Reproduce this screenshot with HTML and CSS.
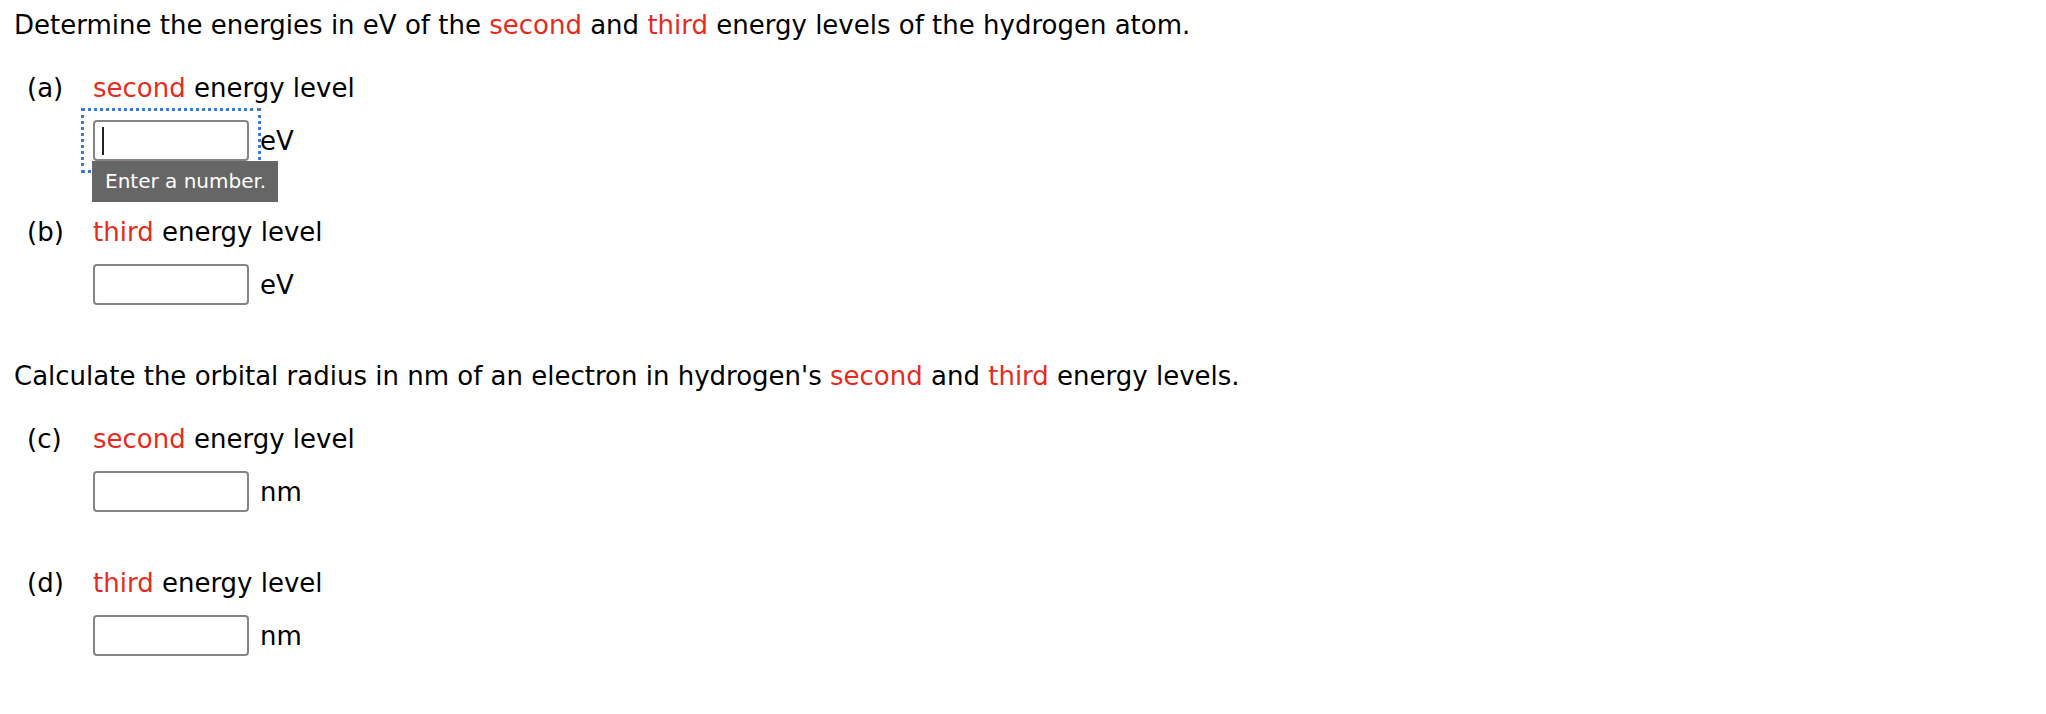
FILE: index.html
```html
<!DOCTYPE html>
<html lang="en">
<head>
    <meta charset="UTF-8">
    <meta name="viewport" content="width=device-width, initial-scale=1.0">
    <title>Hydrogen Energy Levels</title>
    <link rel="stylesheet" href="styles.css">
</head>
<body>
    <div class="question">
        <p class="prompt">Determine the energies in eV of the <span class="red">second</span> and <span class="red">third</span> energy levels of the hydrogen atom.</p>

        <div class="part">
            <div class="part-row"><span class="part-label">(a)</span><span><span class="red">second</span> energy level</span></div>
            <div class="answer">
                <span class="field focused">
                    <input type="text" aria-label="second energy level in eV">
                    <span class="caret"></span>
                    <span class="tip">Enter a number.</span>
                </span>
                <span class="unit">eV</span>
            </div>
        </div>

        <div class="part">
            <div class="part-row"><span class="part-label">(b)</span><span><span class="red">third</span> energy level</span></div>
            <div class="answer">
                <span class="field"><input type="text" aria-label="third energy level in eV"></span>
                <span class="unit">eV</span>
            </div>
        </div>

        <p class="prompt">Calculate the orbital radius in nm of an electron in hydrogen's <span class="red">second</span> and <span class="red">third</span> energy levels.</p>

        <div class="part">
            <div class="part-row"><span class="part-label">(c)</span><span><span class="red">second</span> energy level</span></div>
            <div class="answer">
                <span class="field"><input type="text" aria-label="second energy level radius in nm"></span>
                <span class="unit">nm</span>
            </div>
        </div>

        <div class="part">
            <div class="part-row"><span class="part-label">(d)</span><span><span class="red">third</span> energy level</span></div>
            <div class="answer">
                <span class="field"><input type="text" aria-label="third energy level radius in nm"></span>
                <span class="unit">nm</span>
            </div>
        </div>
    </div>
</body>
</html>
```

FILE: styles.css
```css
body {
    font-family: "DejaVu Sans", Verdana, sans-serif;
    font-size: 26px;
    line-height: 30px;
    color: #000;
    background-color: #fff;
    margin: 0;
    padding: 10px 14px;
}
.prompt {
    margin: 0 0 33px 0;
}
.red {
    color: #e62b1e;
}
.part {
    padding-left: 13px;
    margin-bottom: 56px;
}
.part-row {
    display: flex;
    margin-bottom: 17px;
}
.part-label {
    width: 66px;
}
.answer {
    display: flex;
    align-items: center;
    padding-left: 66px;
}
.field {
    position: relative;
    display: inline-block;
    height: 41px;
}
.field.focused {
    outline: 3px dotted #3a7ad9;
    outline-offset: 9px;
}
.field input {
    display: block;
    box-sizing: border-box;
    width: 156px;
    height: 41px;
    margin: 0;
    padding: 0 8px;
    border: 2px solid #858585;
    border-radius: 4px;
    font-family: inherit;
    font-size: 20px;
    background: #fff;
}
.field input:focus {
    outline: none;
}
.caret {
    position: absolute;
    left: 9px;
    top: 7px;
    width: 2px;
    height: 28px;
    background-color: #222;
}
.tip {
    position: absolute;
    left: -1px;
    top: 41px;
    width: 186px;
    height: 41px;
    box-sizing: border-box;
    padding-left: 13px;
    background-color: #666;
    color: #fff;
    font-size: 20px;
    line-height: 41px;
    white-space: nowrap;
    z-index: 2;
}
.unit {
    margin-left: 11px;
}
```
